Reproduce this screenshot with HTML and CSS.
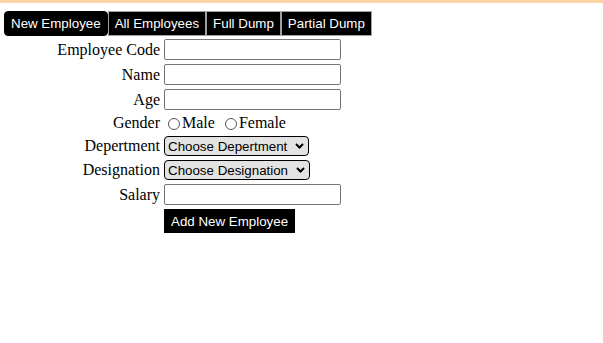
FILE: index.html
```html
<!DOCTYPE html>
<html lang="en">
<head>
    <meta charset="UTF-8">
    <meta name="viewport" content="width=device-width, initial-scale=1.0">
    <title>Employee Manager</title>
    <link rel="stylesheet" href="styles.css">
</head>
<body>
    <!-- Tab bar -->
    <div class="tabs">
        <button class="tab active">New Employee</button>
        <button class="tab">All Employees</button>
        <button class="tab">Full Dump</button>
        <button class="tab">Partial Dump</button>
    </div>

    <form class="employee-form" id="employeeForm">
        <label class="label" for="code">Employee Code</label>
        <input type="text" id="code" class="field">

        <label class="label" for="name">Name</label>
        <input type="text" id="name" class="field">

        <label class="label" for="age">Age</label>
        <input type="text" id="age" class="field">

        <span class="label">Gender</span>
        <div class="radios">
            <label class="radio"><input type="radio" name="gender" value="male">Male</label>
            <label class="radio"><input type="radio" name="gender" value="female">Female</label>
        </div>

        <label class="label" for="dept">Depertment</label>
        <div>
            <span class="select-wrap">
                <select id="dept" class="choice">
                    <option>Choose Depertment</option>
                </select>
                <svg class="chevron" width="9" height="6" viewBox="0 0 9 6"><path d="M1 1 L4.5 4.5 L8 1" fill="none" stroke="#000" stroke-width="2"/></svg>
            </span>
        </div>

        <label class="label" for="desig">Designation</label>
        <div>
            <span class="select-wrap">
                <select id="desig" class="choice">
                    <option>Choose Designation</option>
                </select>
                <svg class="chevron" width="9" height="6" viewBox="0 0 9 6"><path d="M1 1 L4.5 4.5 L8 1" fill="none" stroke="#000" stroke-width="2"/></svg>
            </span>
        </div>

        <label class="label" for="salary">Salary</label>
        <input type="text" id="salary" class="field">

        <span></span>
        <div>
            <button type="submit" class="submit">Add New Employee</button>
        </div>
    </form>
</body>
</html>
```

FILE: styles.css
```css
body {
    margin: 0;
    border-top: 3px solid #fbd6a4;
    background-color: #ffffff;
    font-family: "Liberation Serif", "Times New Roman", serif;
    font-size: 16px;
    color: #000000;
}

.tabs {
    display: flex;
    margin: 8px 0 0 4px;
}

.tab {
    height: 25px;
    padding: 0 6px;
    background-color: #000000;
    color: #ffffff;
    border: 1px solid #a0a0a0;
    font-family: "Liberation Sans", Arial, sans-serif;
    font-size: 13.33px;
    cursor: pointer;
}

.tab.active {
    padding: 0 6px;
    border-color: #000000;
    border-radius: 4px;
}

.employee-form {
    display: grid;
    grid-template-columns: 160px auto;
    column-gap: 4px;
    row-gap: 4px;
    align-items: center;
    margin-top: 3px;
}

.label {
    text-align: right;
    line-height: 18px;
}

.field {
    box-sizing: border-box;
    width: 177px;
    height: 21px;
    margin: 0;
    border: 1px solid #767676;
    border-radius: 2px;
    padding: 1px 2px;
}

.radios {
    display: flex;
    align-items: center;
    height: 18px;
}

.radio {
    display: flex;
    align-items: center;
    margin-right: 6px;
}

.radio input {
    appearance: none;
    box-sizing: border-box;
    width: 12px;
    height: 12px;
    margin: 2px 2px 0 4px;
    border: 1px solid #555555;
    border-radius: 50%;
}

.select-wrap {
    position: relative;
    display: inline-flex;
}

.choice {
    appearance: none;
    box-sizing: border-box;
    height: 20px;
    margin: 0;
    padding: 0 20px 0 3px;
    background-color: #e3e3e3;
    border: 1px solid #000000;
    border-radius: 4px;
    font-family: "Liberation Sans", Arial, sans-serif;
    font-size: 13.33px;
    color: #000000;
}

.chevron {
    position: absolute;
    right: 5px;
    top: 7px;
    pointer-events: none;
}

.submit {
    height: 24px;
    padding: 0 7px;
    background-color: #000000;
    color: #ffffff;
    border: none;
    font-family: "Liberation Sans", Arial, sans-serif;
    font-size: 13.33px;
    cursor: pointer;
}
```
